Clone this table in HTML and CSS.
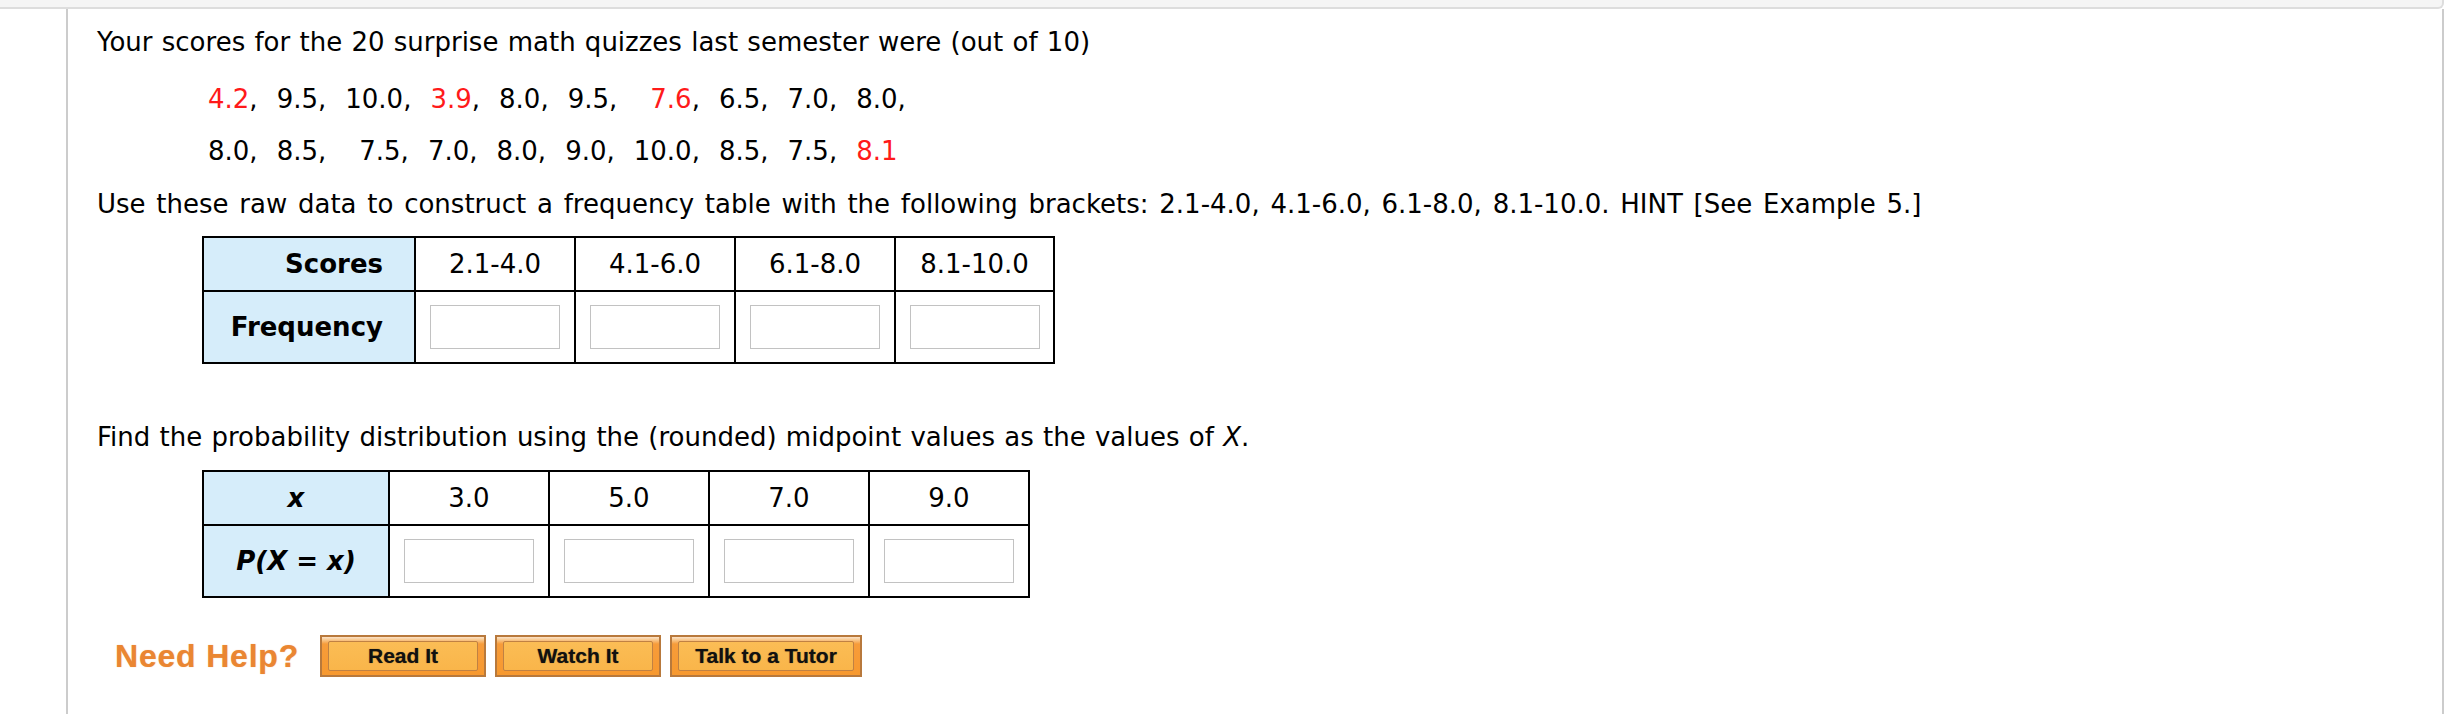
FILE: index.html
```html
<!DOCTYPE html>
<html lang="en">
<head>
<meta charset="utf-8">
<title>Frequency table question</title>
<link rel="stylesheet" href="styles.css">
</head>
<body>
<div class="topbar"></div>
<div class="main">
  <p class="para first">Your scores for the 20 surprise math quizzes last semester were (out of 10)</p>
  <div class="nums">
    <div class="row">
      <span><span class="red">4.2</span>,</span>
      <span>9.5,</span>
      <span>10.0,</span>
      <span><span class="red">3.9</span>,</span>
      <span>8.0,</span>
      <span>9.5,</span>
      <span class="wide"><span class="red">7.6</span>,</span>
      <span>6.5,</span>
      <span>7.0,</span>
      <span>8.0,</span>
    </div>
    <div class="row">
      <span>8.0,</span>
      <span>8.5,</span>
      <span class="wide">7.5,</span>
      <span>7.0,</span>
      <span>8.0,</span>
      <span>9.0,</span>
      <span>10.0,</span>
      <span>8.5,</span>
      <span>7.5,</span>
      <span class="red">8.1</span>
    </div>
  </div>
  <p class="para use">Use these raw data to construct a frequency table with the following brackets: 2.1-4.0, 4.1-6.0, 6.1-8.0, 8.1-10.0. HINT [See Example 5.]</p>

  <div class="grid freq">
    <div class="cell head right">Scores</div>
    <div class="cell">2.1-4.0</div>
    <div class="cell">4.1-6.0</div>
    <div class="cell">6.1-8.0</div>
    <div class="cell">8.1-10.0</div>
    <div class="cell head right">Frequency</div>
    <div class="cell"><input class="box" type="text"></div>
    <div class="cell"><input class="box" type="text"></div>
    <div class="cell"><input class="box" type="text"></div>
    <div class="cell"><input class="box" type="text"></div>
  </div>

  <p class="para find">Find the probability distribution using the (rounded) midpoint values as the values of <i>X</i>.</p>

  <div class="grid prob">
    <div class="cell head it">x</div>
    <div class="cell">3.0</div>
    <div class="cell">5.0</div>
    <div class="cell">7.0</div>
    <div class="cell">9.0</div>
    <div class="cell head it">P(X = x)</div>
    <div class="cell"><input class="box" type="text"></div>
    <div class="cell"><input class="box" type="text"></div>
    <div class="cell"><input class="box" type="text"></div>
    <div class="cell"><input class="box" type="text"></div>
  </div>

  <div class="help">
    <span class="need">Need Help?</span>
    <span class="btn w166"><span class="btn-in">Read It</span></span>
    <span class="btn w166"><span class="btn-in">Watch It</span></span>
    <span class="btn w192"><span class="btn-in">Talk to a Tutor</span></span>
  </div>
</div>
</body>
</html>
```

FILE: styles.css
```css
html, body {
  margin: 0;
  padding: 0;
  background: #fff;
}

body {
  font-family: "DejaVu Sans", Verdana, sans-serif;
  font-size: 26px;
  color: #000;
  overflow: hidden;
}

.topbar {
  box-sizing: border-box;
  width: 2444px;
  height: 9px;
  background: #f5f5f5;
  border-bottom: 2px solid #dddddd;
  border-right: 2px solid #dddddd;
  border-bottom-right-radius: 6px;
}

.main {
  box-sizing: border-box;
  margin-left: 66px;
  width: 2378px;
  min-height: 705px;
  border-left: 2px solid #cccccc;
  border-right: 2px solid #cccccc;
  padding: 17px 0 0 29px;
}

.para {
  margin: 0;
  line-height: 32px;
  white-space: nowrap;
  word-spacing: 1px;
}

.para i {
  font-style: italic;
}

.nums {
  margin: 15px 0 0 111px;
}

.nums .row {
  display: flex;
  gap: 19px;
  height: 52px;
  line-height: 52px;
  white-space: nowrap;
}

.nums .wide {
  margin-left: 14px;
}

.red {
  color: #ff1a1a;
}

.use {
  margin-top: 11px;
  word-spacing: 2.5px;
}

.grid {
  display: grid;
  grid-template-rows: 54px 72px;
  border-top: 2px solid #000;
  border-left: 2px solid #000;
  margin-left: 105px;
}

.freq {
  width: 853px;
  grid-template-columns: 212px 160px 160px 160px 159px;
  margin-top: 16px;
}

.prob {
  width: 828px;
  grid-template-columns: 186px 160px 160px 160px 160px;
  margin-top: 17px;
}

.grid, .cell {
  box-sizing: border-box;
}

.cell {
  display: flex;
  align-items: center;
  justify-content: center;
  border-right: 2px solid #000;
  border-bottom: 2px solid #000;
  white-space: nowrap;
}

.head {
  background: #d6edfa;
  font-weight: bold;
}

.right {
  justify-content: flex-end;
  padding-right: 31px;
}

.it {
  font-style: italic;
}

.box {
  box-sizing: border-box;
  width: 130px;
  height: 44px;
  margin: 0;
  padding: 0;
  border: 1px solid #c2c2c2;
  background: #fff;
  outline: none;
}

.find {
  margin-top: 57px;
}

.help {
  display: flex;
  align-items: center;
  margin: 37px 0 0 18px;
  height: 42px;
}

.need {
  font-family: "Liberation Sans", Arial, sans-serif;
  font-weight: bold;
  font-size: 32px;
  letter-spacing: 0.8px;
  color: #ea8632;
  text-shadow: 0 0 1px rgba(234, 134, 50, 0.6);
  margin-right: 21px;
}

.btn {
  box-sizing: border-box;
  display: flex;
  height: 42px;
  padding: 4px 6px 4px 6px;
  margin-right: 9px;
  border: 2px solid #b8793c;
  background: linear-gradient(to bottom, #fbe3c9 0, #f9c689 3px, #f79c3a 7px, #f7992f 100%);
}

.w166 { width: 166px; }
.w192 { width: 192px; }

.btn-in {
  flex: 1;
  display: flex;
  align-items: center;
  justify-content: center;
  border: 1px solid #c08143;
  border-radius: 2px;
  background: linear-gradient(to bottom, #fbbd55 0, #f9b54a 100%);
  font-family: "Liberation Sans", Arial, sans-serif;
  font-weight: bold;
  font-size: 21px;
  color: #111;
  text-shadow: 0 0 1px rgba(0, 0, 0, 0.55);
  white-space: nowrap;
}
```
